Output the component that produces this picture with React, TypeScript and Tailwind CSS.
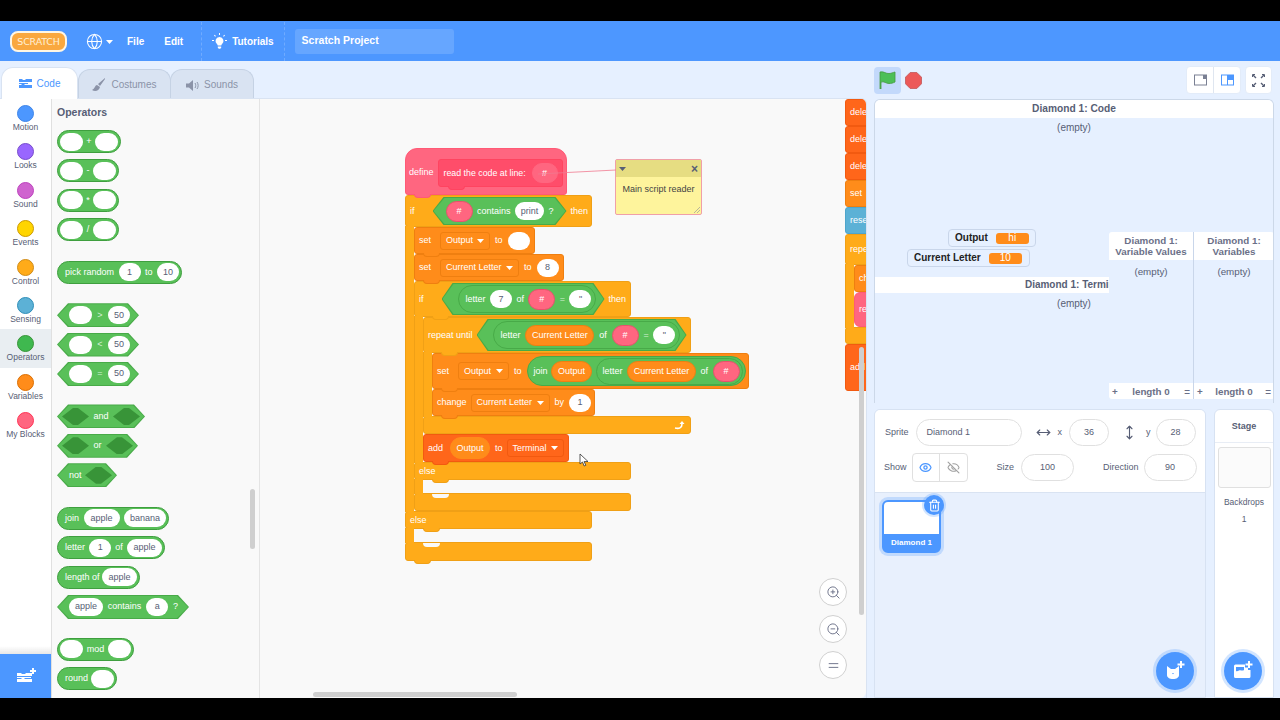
import React from "react";
import { Globe, MoveHorizontal, MoveVertical, Eye, EyeOff, Trash2, ZoomIn, ZoomOut, Equal } from "lucide-react";

const HEX = "[clip-path:polygon(0_50%,11px_0,calc(100%_-_11px)_0,100%_50%,calc(100%_-_11px)_100%,11px_100%)]";
const CTRL = "bg-[#ffab19] border-[#f0a016]";
const VAR = "bg-[#ff8c1a] border-[#ef7f10]";
const LIST = "bg-[#ff661a] border-[#f25a10]";

type P = { c?: string; children?: React.ReactNode };

function In({ c = "", children }: P) {
  return <div className={`flex items-center justify-center shrink-0 rounded-full bg-white text-[#575e75] text-[9px] leading-none ${c}`}>{children}</div>;
}
function Pal({ c = "", children }: P) {
  return <div className={`flex items-center shrink-0 h-[23px] rounded-full bg-[#59c059] border border-[#3f9f3f] text-white text-[9px] leading-none whitespace-nowrap ${c}`}>{children}</div>;
}
function Hex({ c = "", inner = "", children }: P & { inner?: string }) {
  return (
    <div className={`shrink-0 bg-[#48aa48] p-px ${HEX} ${c}`}>
      <div className={`flex items-center w-full h-full bg-[#59c059] text-white text-[9px] leading-none whitespace-nowrap ${HEX} ${inner}`}>{children}</div>
    </div>
  );
}
function Dark({ c = "" }: P) {
  return <div className={`shrink-0 h-[17px] bg-[#389438] ${HEX} ${c}`} />;
}
function Oval({ c = "", children }: P) {
  const j = c.includes("justify-between") ? "" : "justify-center";
  return <div className={`flex items-center shrink-0 rounded-full border text-white text-[9px] leading-none whitespace-nowrap ${j} ${c}`}>{children}</div>;
}
function Caret() {
  return (
    <svg width="7" height="4" viewBox="0 0 7 4" className="shrink-0">
      <path d="M0 0h7L3.5 4z" fill="#fff" />
    </svg>
  );
}
function Drop({ c = "", children }: P) {
  return (
    <div className={`flex items-center justify-between shrink-0 h-[18px] px-[5px] rounded-[3px] border text-white text-[9px] leading-none whitespace-nowrap ${c}`}>
      {children}
      <Caret />
    </div>
  );
}
function Notch({ c = "" }: P) {
  return <div className={`absolute top-full z-10 w-[17px] h-[4px] rounded-b-[5px] border-b border-x ${c}`} />;
}
function Dent({ c = "" }: P) {
  return <div className={`absolute top-0 z-10 w-[17px] h-[4px] rounded-b-[5px] bg-[#f9f9f9] ${c}`} />;
}
function Bar({ c = "", children }: P) {
  return <div className={`relative flex items-center shrink-0 rounded-[3px] border text-white text-[9px] leading-none whitespace-nowrap ${c}`}>{children}</div>;
}
function Arm({ c = "" }: P) {
  return <div className={`relative z-[1] -my-px w-[9px] shrink-0 bg-[#ffab19] border-l border-[#f0a016] ${c}`} />;
}

const categories = [
  ["Motion", "bg-[#4c97ff] border-[#3f85e8]"],
  ["Looks", "bg-[#9966ff] border-[#774dcb]"],
  ["Sound", "bg-[#cf63cf] border-[#bd42bd]"],
  ["Events", "bg-[#ffd500] border-[#cc9900]"],
  ["Control", "bg-[#ffab19] border-[#cf8b17]"],
  ["Sensing", "bg-[#5cb1d6] border-[#2e8eb8]"],
  ["Operators", "bg-[#3fb84f] border-[#389438]"],
  ["Variables", "bg-[#ff8c1a] border-[#db6e00]"],
  ["My Blocks", "bg-[#ff6680] border-[#ff3355]"],
];

function Categories() {
  return (
    <div className="flex flex-col w-[52px] shrink-0 bg-white border-r border-[#e0e0e0]">
      {categories.map(([n, col]) => (
        <div key={n} className={`flex flex-col items-center h-[38.4px] pt-[6px] shrink-0 ${n === "Operators" ? "bg-[#e9eef2]" : ""}`}>
          <div className={`w-[17px] h-[17px] rounded-full border ${col}`} />
          <span className="text-[8.5px] leading-[11px] text-[#575e75] whitespace-nowrap">{n}</span>
        </div>
      ))}
      <div className="mt-auto h-[8px] bg-gradient-to-b from-transparent to-[#00000018]" />
      <div className="flex items-center justify-center h-[44px] bg-[#4c97ff]">
        <svg width="20" height="16" viewBox="0 0 20 16" fill="#fff">
          <path d="M1 5h4l1 1h3l1-1h6v3H1zM1 9h14v1H9l-1 1H6l-1-1H1zM1 11h15v3H1z" />
          <path d="M16 0h2v2h2v2h-2v2h-2V4h-2V2h2z" />
        </svg>
      </div>
    </div>
  );
}

function Palette() {
  return (
    <div className="relative w-[208px] shrink-0 h-full overflow-hidden bg-[#f9f9f9] border-r border-[#e4e4e4] pl-[5px]">
      <div className="mt-[6px] text-[10.5px] leading-[14px] font-bold text-[#575e75]">Operators</div>
      <div className="mt-[11px] flex flex-col items-start gap-[6.4px]">
        <Pal c="w-[64px] justify-between px-[2px]"><In c="w-[23px] h-[18px]" />+<In c="w-[23px] h-[18px]" /></Pal>
        <Pal c="w-[62px] justify-between px-[2px]"><In c="w-[23px] h-[18px]" />-<In c="w-[23px] h-[18px]" /></Pal>
        <Pal c="w-[62px] justify-between px-[2px]"><In c="w-[23px] h-[18px]" />*<In c="w-[23px] h-[18px]" /></Pal>
        <Pal c="w-[62px] justify-between px-[2px]"><In c="w-[23px] h-[18px]" />/<In c="w-[23px] h-[18px]" /></Pal>
      </div>
      <div className="mt-[19.5px]">
        <Pal c="w-[125px] pl-[7px] pr-[2px] justify-between">pick random<In c="w-[22px] h-[18px]">1</In>to<In c="w-[22px] h-[18px]">10</In></Pal>
      </div>
      <div className="mt-[19.5px] flex flex-col items-start gap-[5.4px]">
        {[">", "<", "="].map((s) => (
          <Hex key={s} c="w-[82px] h-[24px]" inner="pl-[11px] pr-[8px] justify-between">
            <In c="w-[23px] h-[18px]" /><span className="text-[#d5f0d5]">{s}</span><In c="w-[22px] h-[18px]">50</In>
          </Hex>
        ))}
      </div>
      <div className="mt-[18.5px] flex flex-col items-start gap-[5.4px]">
        <Hex c="w-[88px] h-[24px]" inner="px-[4px] justify-between"><Dark c="w-[27px]" />and<Dark c="w-[27px]" /></Hex>
        <Hex c="w-[81px] h-[24px]" inner="px-[4px] justify-between"><Dark c="w-[27px]" />or<Dark c="w-[27px]" /></Hex>
        <Hex c="w-[60px] h-[24px]" inner="pl-[11px] pr-[4px] justify-between">not<Dark c="w-[27px]" /></Hex>
      </div>
      <div className="mt-[19.5px] flex flex-col items-start gap-[6.4px]">
        <Pal c="w-[112px] pl-[7px] pr-[2px] justify-between">join<In c="w-[36px] h-[18px]">apple</In><In c="w-[42px] h-[18px]">banana</In></Pal>
        <Pal c="w-[108px] pl-[7px] pr-[2px] justify-between">letter<In c="w-[22px] h-[18px]">1</In>of<In c="w-[35px] h-[18px]">apple</In></Pal>
        <Pal c="w-[83px] pl-[7px] pr-[2px] justify-between">length of<In c="w-[35px] h-[18px]">apple</In></Pal>
        <Hex c="w-[132px] h-[24px]" inner="pl-[11px] pr-[10px] justify-between"><In c="w-[34px] h-[18px]">apple</In>contains<In c="w-[22px] h-[18px]">a</In>?</Hex>
      </div>
      <div className="mt-[19px] flex flex-col items-start gap-[6.4px]">
        <Pal c="w-[77px] px-[2px] justify-between"><In c="w-[23px] h-[18px]" />mod<In c="w-[23px] h-[18px]" /></Pal>
        <Pal c="w-[60px] pl-[7px] pr-[2px] justify-between">round<In c="w-[23px] h-[18px]" /></Pal>
      </div>
      <div className="absolute left-[198px] top-[390px] w-[5px] h-[60px] rounded-full bg-[#cfcfcf]" />
    </div>
  );
}

function Script() {
  return (
    <div className="absolute left-[145px] top-[49px] flex flex-col items-start">
      <div className="relative flex items-start w-[162px] h-[47px] shrink-0 bg-[#ff6680] border border-[#ff5a76] rounded-t-[12px] rounded-b-[3px] text-white text-[9px] leading-none whitespace-nowrap">
        <span className="mt-[19px] ml-[3px]">define</span>
        <div className="relative flex items-center mt-[10px] ml-[4px] w-[125px] h-[28px] rounded-[3px] bg-[#ff4d6a] border border-[#ff4460] pl-[5px] text-[8.8px]">
          read the code at line:
          <Oval c="absolute left-[93px] top-[3px] w-[26px] h-[20px] bg-[#ff6680] border-[#ff6680]">#</Oval>
          <Notch c="left-[9px] bg-[#ff4d6a] border-[#ff4460]" />
        </div>
        <Notch c="left-[8px] bg-[#ff6680] border-[#ff5a76]" />
      </div>

      <div className="flex flex-col items-start">
        <Bar c={`w-[187px] h-[32px] pl-[4px] ${CTRL}`}>
          if
          <Hex c="ml-[18px] w-[134px] h-[28px]" inner="pl-[12px] pr-[12px] justify-between">
            <Oval c="w-[27px] h-[21px] bg-[#ff6680] border-[#e8506c]">#</Oval>
            contains
            <In c="w-[29px] h-[18px]">print</In>
            ?
          </Hex>
          <span className="ml-[4px]">then</span>
        </Bar>
        <div className="flex items-stretch">
          <Arm />
          <div className="flex flex-col items-start">
            <Bar c={`w-[121px] h-[27px] pl-[4px] ${VAR}`}>
              set
              <Drop c={`ml-[9px] w-[50px] ${VAR}`}>Output</Drop>
              <span className="ml-[5px]">to</span>
              <In c="ml-[5px] w-[22px] h-[18px]" />
              <Notch c={`left-[8px] ${VAR}`} />
            </Bar>
            <Bar c={`w-[150px] h-[27px] pl-[4px] ${VAR}`}>
              set
              <Drop c={`ml-[9px] w-[79px] ${VAR}`}>Current Letter</Drop>
              <span className="ml-[5px]">to</span>
              <In c="ml-[5px] w-[22px] h-[18px]">8</In>
              <Notch c={`left-[8px] ${VAR}`} />
            </Bar>

            <Bar c={`w-[217px] h-[36px] pl-[4px] ${CTRL}`}>
              if
              <Hex c="ml-[18px] w-[163px] h-[32px]" inner="pl-[15px]">
                <Oval c="w-[138px] h-[28px] bg-[#59c059] border-[#48aa48] pl-[7px] pr-[3px] justify-between">
                  letter
                  <In c="w-[22px] h-[18px]">7</In>
                  of
                  <Oval c="w-[27px] h-[21px] bg-[#ff6680] border-[#e8506c]">#</Oval>
                  <span className="text-[#d5f0d5]">=</span>
                  <In c="w-[22px] h-[18px]">"</In>
                </Oval>
              </Hex>
              <span className="ml-[4px]">then</span>
              <Notch c={`left-[17px] ${CTRL}`} />
            </Bar>
            <div className="flex items-stretch">
              <Arm />
              <div className="flex flex-col items-start">
                <Bar c={`w-[268px] h-[36px] pl-[4px] ${CTRL}`}>
                  repeat until
                  <Hex c="ml-[4px] w-[210px] h-[32px]" inner="pl-[15px]">
                    <Oval c="w-[187px] h-[28px] bg-[#59c059] border-[#48aa48] pl-[7px] pr-[3px] justify-between">
                      letter
                      <Oval c={`w-[69px] h-[21px] ${VAR}`}>Current Letter</Oval>
                      of
                      <Oval c="w-[27px] h-[21px] bg-[#ff6680] border-[#e8506c]">#</Oval>
                      <span className="text-[#d5f0d5]">=</span>
                      <In c="w-[22px] h-[18px]">"</In>
                    </Oval>
                  </Hex>
                  <Notch c={`left-[17px] ${CTRL}`} />
                </Bar>
                <div className="flex items-stretch">
                  <Arm />
                  <div className="flex flex-col items-start">
                    <Bar c={`w-[317px] h-[36px] pl-[4px] ${VAR}`}>
                      set
                      <Drop c={`ml-[9px] w-[51px] ${VAR}`}>Output</Drop>
                      <span className="ml-[5px]">to</span>
                      <Oval c="ml-[5px] w-[219px] h-[30px] bg-[#59c059] border-[#48aa48] pl-[6px] pr-[2px] justify-between">
                        join
                        <Oval c={`w-[41px] h-[21px] ${VAR}`}>Output</Oval>
                        <Oval c="w-[147px] h-[27px] bg-[#59c059] border-[#48aa48] pl-[6px] pr-[2px] justify-between">
                          letter
                          <Oval c={`w-[69px] h-[21px] ${VAR}`}>Current Letter</Oval>
                          of
                          <Oval c="w-[27px] h-[21px] bg-[#ff6680] border-[#e8506c]">#</Oval>
                        </Oval>
                      </Oval>
                      <Notch c={`left-[8px] ${VAR}`} />
                    </Bar>
                    <Bar c={`w-[163px] h-[27px] pl-[4px] ${VAR}`}>
                      change
                      <Drop c={`ml-[4px] w-[79px] ${VAR}`}>Current Letter</Drop>
                      <span className="ml-[5px]">by</span>
                      <In c="ml-[5px] w-[22px] h-[18px]">1</In>
                      <Notch c={`left-[8px] ${VAR}`} />
                    </Bar>
                  </div>
                </div>
                <Bar c={`w-[268px] h-[18px] justify-end pr-[5px] ${CTRL}`}>
                  <svg width="11" height="10" viewBox="0 0 11 10" fill="none" stroke="#fff" strokeWidth="1.6">
                    <path d="M1 8c4 1 7 0 7-4" />
                    <path d="M5.5 4h5L8 1z" fill="#fff" stroke="none" />
                  </svg>
                </Bar>
                <Bar c={`w-[146px] h-[28px] pl-[4px] ${LIST}`}>
                  add
                  <Oval c="ml-[7px] w-[40px] h-[22px] bg-[#ff8c1a] border-[#ff8c1a]">Output</Oval>
                  <span className="ml-[5px]">to</span>
                  <Drop c={`ml-[4px] w-[57px] ${LIST}`}>Terminal</Drop>
                  <Notch c={`left-[8px] ${LIST}`} />
                </Bar>
              </div>
            </div>
            <Bar c={`w-[217px] h-[18px] pl-[4px] ${CTRL}`}>else<Notch c={`left-[17px] ${CTRL}`} /></Bar>
            <div className="flex items-stretch h-[13px]"><Arm /></div>
            <Bar c={`w-[217px] h-[18px] ${CTRL}`}><Dent c="left-[17px]" /></Bar>
          </div>
        </div>
        <Bar c={`w-[187px] h-[18px] pl-[4px] ${CTRL}`}>else<Notch c={`left-[17px] ${CTRL}`} /></Bar>
        <div className="flex items-stretch h-[13px]"><Arm /></div>
        <Bar c={`w-[187px] h-[19px] ${CTRL}`}>
          <Dent c="left-[17px]" />
          <Notch c={`left-[8px] ${CTRL}`} />
        </Bar>
      </div>
    </div>
  );
}

function EdgeScript() {
  const S = "w-[40px] h-[27px] pl-[4px]";
  return (
    <div className="absolute left-[585px] top-0 flex flex-col items-start">
      <Bar c={`${S} ${LIST}`}>delete</Bar>
      <Bar c={`${S} ${LIST}`}>delete</Bar>
      <Bar c={`${S} ${LIST}`}>delete</Bar>
      <Bar c={`${S} ${VAR}`}>set</Bar>
      <Bar c={`${S} bg-[#5cb1d6] border-[#4ea5cb]`}>reset</Bar>
      <Bar c={`w-[40px] h-[31px] pl-[4px] ${CTRL}`}>repeat</Bar>
      <div className="flex items-stretch">
        <Arm />
        <div className="flex flex-col items-start">
          <Bar c={`w-[40px] h-[27px] pl-[4px] ${VAR}`}>change</Bar>
          <Bar c="w-[40px] h-[35px] pl-[4px] rounded-l-[6px] bg-[#ff6680] border-[#ff5a76]">read</Bar>
        </div>
      </div>
      <Bar c={`w-[40px] h-[17px] ${CTRL}`} />
      <Bar c={`w-[40px] h-[47px] pl-[4px] ${LIST}`}>add</Bar>
    </div>
  );
}

function Sticky() {
  return (
    <div className="absolute left-[355px] top-[60px] w-[87px] h-[56px] flex flex-col bg-[#fef49c] border border-[#f0a0a8] rounded-[2px] text-[#575e75]">
      <div className="flex items-center justify-between h-[17px] px-[3px] bg-[#e6dd82]">
        <svg width="7" height="4" viewBox="0 0 7 4"><path d="M0 0h7L3.5 4z" fill="#575e75" /></svg>
        <span className="text-[12px] leading-none font-bold">×</span>
      </div>
      <div className="text-[9px] leading-none text-center mt-[8px] whitespace-nowrap text-[#444]">Main script reader</div>
      <svg width="6" height="6" viewBox="0 0 6 6" className="absolute right-[1px] bottom-[1px]" stroke="#999" strokeWidth="0.7"><path d="M0 6L6 0M3 6l3-3" /></svg>
    </div>
  );
}

function Workspace() {
  return (
    <div className="relative flex-1 h-full overflow-hidden bg-[#f9f9f9] rounded-br-[6px]">
      <EdgeScript />
      <Script />
      <svg width="80" height="6" viewBox="0 0 80 6" className="absolute left-[278px] top-[70px] z-20">
        <path d="M0 5L78 1" stroke="#f07a90" strokeWidth="0.8" />
      </svg>
      <Sticky />
      {[
        { t: "top-[479px]", I: ZoomIn },
        { t: "top-[516px]", I: ZoomOut },
        { t: "top-[552px]", I: Equal },
      ].map(({ t, I }) => (
        <div key={t} className={`absolute left-[559px] ${t} w-[28px] h-[28px] rounded-full bg-white border border-[#d0d0d0] flex items-center justify-center`}>
          <I size={15} strokeWidth={1.5} color="#6b7088" />
        </div>
      ))}
      <div className="absolute left-[599px] top-[248px] w-[5px] h-[268px] rounded-full bg-[#cfcfcf]" />
      <div className="absolute left-[53px] top-[593px] w-[204px] h-[5px] rounded-full bg-[#cfcfcf]" />
      <svg width="12" height="14" viewBox="0 0 12 14" className="absolute left-[319px] top-[354px] z-20">
        <path d="M1 1v10l2.5-2 1.7 4 1.6-.7-1.7-3.8H9z" fill="#fff" stroke="#333" strokeWidth="0.8" />
      </svg>
    </div>
  );
}

function Header() {
  return (
    <div className="flex items-center h-[40px] pt-[1px] shrink-0 bg-[#4d97ff] text-white text-[10px] font-bold leading-none">
      <div className="ml-[10px] flex items-center justify-center w-[57px] h-[21px] rounded-[8px] bg-[#f9a83f] border-2 border-[#fff6e3]">
        <span className="text-[9.5px] font-normal text-[#fff0d6] tracking-[-0.2px] [font-family:'DejaVu_Sans',sans-serif]">SCRATCH</span>
      </div>
      <Globe size={17} strokeWidth={1.5} className="ml-[19px]" />
      <svg width="7" height="4" viewBox="0 0 7 4" className="ml-[3px]"><path d="M0 0h7L3.5 4z" fill="#fff" /></svg>
      <span className="ml-[14px]">File</span>
      <span className="ml-[20px]">Edit</span>
      <div className="ml-[18px] h-full border-l border-dashed border-[#ffffff33]" />
      <svg width="17" height="18" viewBox="0 0 17 18" className="ml-[9px]" fill="#fff">
        <path d="M8.5 4a4 4 0 0 0-2.4 7.2c.4.4.6.8.6 1.3h3.6c0-.5.2-.9.6-1.3A4 4 0 0 0 8.5 4zM6.8 13.5h3.4v1.2l-1 1H7.8l-1-1z" />
        <path d="M8 0h1v2H8zM1 7h2v1H1zM14 7h2v1h-2zM3 2.5l.7-.7 1.2 1.2-.7.7zM14 2.5l-.7-.7-1.2 1.2.7.7z" />
      </svg>
      <span className="ml-[4px]">Tutorials</span>
      <div className="ml-[10px] h-full border-l border-dashed border-[#ffffff33]" />
      <div className="ml-[10px] flex items-start pt-[6px] pl-[7px] w-[159px] h-[25px] rounded-[3px] bg-[#ffffff25] text-[10.5px]">Scratch Project</div>
    </div>
  );
}

function Tabs() {
  return (
    <div className="flex items-end h-[37px] shrink-0 pl-px text-[10px] leading-none">
      <div className="relative z-[1] -mb-px flex items-center justify-center gap-[4px] w-[77px] h-[32px] rounded-t-[12px] bg-white border border-b-0 border-[#d9e3f2] text-[#4c97ff]">
        <svg width="14" height="11" viewBox="0 0 14 11" fill="#4c97ff">
          <path d="M0 1h3l1 1h2l1-1h6v3H0zM0 5h9v1H6l-1 1H3L2 6H0zM0 7h13v3H0z" />
        </svg>
        Code
      </div>
      <div className="flex items-center justify-center gap-[5px] w-[93px] h-[29px] pt-[2px] rounded-t-[12px] bg-[#d9e3f2] border border-b-0 border-[#c5d2e4] text-[#8b93a8]">
        <svg width="14" height="14" viewBox="0 0 14 14" fill="#8b93a8"><path d="M13 0L6 6l2 2 5-7zM5 7C3 7 3.500 10 0 12c3 2 7 1 8-3z" /></svg>
        Costumes
      </div>
      <div className="flex items-center justify-center gap-[5px] w-[84px] h-[29px] pt-[2px] -ml-px rounded-t-[12px] bg-[#d9e3f2] border border-b-0 border-[#c5d2e4] text-[#8b93a8]">
        <svg width="13" height="11" viewBox="0 0 13 11" fill="#8b93a8"><path d="M0 3.500h3L7 0v11L3 7.500H0z" /><path d="M9 3c1 1.500 1 3.500 0 5M11 2c1.500 2 1.500 5 0 7" stroke="#8b93a8" fill="none" /></svg>
        Sounds
      </div>
    </div>
  );
}

function StageHead() {
  return (
    <div className="flex items-center h-[38px] shrink-0">
      <div className="flex items-center justify-center w-[27px] h-[27px] rounded-[4px] bg-[#c3d9fb]">
        <svg width="17" height="18" viewBox="0 0 17 18">
          <path d="M1 1c4-1 6 2 9 1.500 2 0 4-1 6-1.500v10c-2 1-4 1.500-6 1.500-3 0-5-2.500-8-1.500V18H1z" fill="#4cbf56" stroke="#45993d" strokeWidth="0.8" />
        </svg>
      </div>
      <svg width="17" height="17" viewBox="0 0 18 18" className="ml-[4px]">
        <polygon points="5.500,0.500 12.500,0.500 17.500,5.500 17.500,12.500 12.500,17.500 5.500,17.500 0.500,12.500 0.500,5.500" fill="#ec5959" stroke="#b84848" strokeWidth="0.7" />
      </svg>
      <div className="ml-auto flex h-[28px] w-[55px] rounded-[4px] bg-white border border-[#e3ecf9]">
        <div className="flex flex-1 items-center justify-center border-r border-[#dfe6f0]">
          <svg width="13" height="12" viewBox="0 0 13 12"><rect x=".5" y="1" width="12" height="10" fill="none" stroke="#7a8093" /><rect x="9" y="1" width="3.500" height="4" fill="#7a8093" /></svg>
        </div>
        <div className="flex flex-1 items-center justify-center">
          <svg width="13" height="12" viewBox="0 0 13 12"><rect x=".5" y="1" width="12" height="10" fill="none" stroke="#4c97ff" /><rect x="6" y="1" width="6.500" height="5" fill="#4c97ff" /><rect x="6" y="1" width="1" height="10" fill="#4c97ff" /></svg>
        </div>
      </div>
      <div className="ml-[4px] mr-[2px] flex items-center justify-center w-[27px] h-[28px] rounded-[4px] bg-white border border-[#e3ecf9]">
        <svg width="13" height="13" viewBox="0 0 13 13" fill="none" stroke="#575e75" strokeWidth="1.400">
          <path d="M1 1l3 3M12 1L9 4M1 12l3-3M12 12L9 9" />
          <path d="M0.500 3V.500H3M12.500 3V.500H10M.500 10v2.500H3M12.500 10v2.500H10" strokeWidth="1" />
        </svg>
      </div>
    </div>
  );
}

function ListMon({ title2, c = "" }: { title2: string; c?: string }) {
  return (
    <div className={`flex flex-col h-full bg-[#e6f0ff] text-[9.8px] leading-[11px] text-[#6b7088] ${c}`}>
      <div className="flex flex-col items-center justify-center h-[28px] bg-white font-bold shrink-0">
        <span>Diamond 1:</span>
        <span>{title2}</span>
      </div>
      <div className="text-center mt-[6px] flex-1 font-normal text-[#575e75]">(empty)</div>
      <div className="flex items-center justify-between h-[16px] bg-white px-[3px] font-bold shrink-0">
        <span>+</span>
        <span>length 0</span>
        <span>=</span>
      </div>
    </div>
  );
}

function Stage() {
  return (
    <div className="relative h-[304px] shrink-0 rounded-t-[6px] border border-[#ccd8e8] border-b-0 bg-[#e6f0ff] overflow-hidden text-[10px] leading-none text-[#575e75]">
      <div className="flex items-center justify-center h-[18px] bg-white font-bold text-[10.2px]">Diamond 1: Code</div>
      <div className="text-center mt-[5px]">(empty)</div>
      <div className="absolute left-[73px] top-[129px] flex items-center gap-[8px] w-[88px] h-[18px] pl-[6px] rounded-[4px] border border-[#c9d6ea] font-bold text-[#222]">
        Output
        <span className="flex items-center justify-center w-[33px] h-[11px] rounded-[3px] bg-[#ff8c1a] text-white font-normal">hi</span>
      </div>
      <div className="absolute left-[32px] top-[149px] flex items-center gap-[8px] w-[123px] h-[18px] pl-[6px] rounded-[4px] border border-[#c9d6ea] font-bold text-[#222]">
        Current Letter
        <span className="flex items-center justify-center w-[33px] h-[11px] rounded-[3px] bg-[#ff8c1a] text-white font-normal">10</span>
      </div>
      <div className="absolute left-0 right-0 top-[177px]">
        <div className="flex items-center justify-center h-[16px] bg-white font-bold">Diamond 1: Terminal</div>
        <div className="text-center mt-[6px]">(empty)</div>
      </div>
      <div className="absolute left-[234px] top-[132px] h-[167px] flex rounded-[3px] overflow-hidden">
        <ListMon title2="Variable Values" c="w-[85px] border-r border-[#c9d6ea]" />
        <ListMon title2="Variables" c="w-[80px]" />
      </div>
    </div>
  );
}

function Field({ c = "", children }: P) {
  return <div className={`flex items-center h-[27px] rounded-full border border-[#e0e0e0] text-[9px] text-[#575e75] shrink-0 ${c}`}>{children}</div>;
}

function SpritePane() {
  return (
    <div className="relative flex flex-col w-[332px] h-full rounded-t-[6px] border border-[#d7e2f2] bg-[#e8f0fd] overflow-hidden text-[9px] leading-none text-[#575e75]">
      <div className="h-[83px] shrink-0 bg-white border-b border-[#d9e3f2] flex flex-col">
        <div className="flex items-center h-[27px] mt-[9px] pl-[10px]">
          <span>Sprite</span>
          <Field c="ml-[7px] w-[106px] pl-[10px]">Diamond 1</Field>
          <MoveHorizontal size={15} strokeWidth={1.8} className="ml-[14px]" />
          <span className="ml-[7px]">x</span>
          <Field c="ml-[7px] w-[40px] justify-center">36</Field>
          <MoveVertical size={15} strokeWidth={1.8} className="ml-[13px]" />
          <span className="ml-[9px]">y</span>
          <Field c="ml-[5px] w-[40px] justify-center">28</Field>
        </div>
        <div className="flex items-center h-[29px] mt-[7px] pl-[9px]">
          <span>Show</span>
          <div className="ml-[5px] flex w-[56px] h-[29px] rounded-[4px] border border-[#e0e0e0]">
            <div className="flex flex-1 items-center justify-center border-r border-[#e0e0e0]"><Eye size={13} color="#4c97ff" strokeWidth={2.4} /></div>
            <div className="flex flex-1 items-center justify-center"><EyeOff size={13} color="#a0a0a0" strokeWidth={2} /></div>
          </div>
          <span className="ml-[29px]">Size</span>
          <Field c="ml-[7px] w-[53px] justify-center h-[27px]">100</Field>
          <span className="ml-[29px]">Direction</span>
          <Field c="ml-[5px] w-[53px] justify-center h-[27px]">90</Field>
        </div>
      </div>
      <div className="relative ml-[7px] mt-[7px] w-[59px] h-[53px] rounded-[6px] border-2 border-[#4c97ff] bg-white flex flex-col justify-end shadow-[0_0_0_3px_#4c97ff40]">
        <div className="flex items-center justify-center h-[17px] bg-[#4c97ff] text-white font-bold text-[8px]">Diamond 1</div>
      </div>
      <div className="absolute left-[49px] top-[85px] w-[20px] h-[20px] rounded-full bg-[#4c97ff] shadow-[0_0_0_2px_#4c97ff40] flex items-center justify-center">
        <Trash2 size={13} color="#fff" strokeWidth={2} />
      </div>
      <div className="absolute right-[11px] bottom-[7px] w-[38px] h-[38px] rounded-full bg-[#4c97ff] shadow-[0_0_0_3px_#4c97ff40] flex items-center justify-center">
        <svg width="20" height="20" viewBox="0 0 20 20" fill="#fff">
          <path d="M2 5l4 3h4l4-3v9c0 2.500-2.500 4-6 4s-6-1.500-6-4z" />
          <path d="M7 12h2l-1 1.200z" fill="#4c97ff" />
          <path d="M15 0h2v2.500h2.500v2H17V7h-2V4.500h-2.500v-2H15z" />
        </svg>
      </div>
    </div>
  );
}

function StageSelect() {
  return (
    <div className="relative flex flex-col items-center w-[60px] h-full rounded-t-[6px] border border-[#d7e2f2] bg-white text-[#575e75] leading-none">
      <div className="flex items-center justify-center w-full h-[33px] border-b border-[#e8edf5] text-[9px] font-bold">Stage</div>
      <div className="mt-[4px] w-[53px] h-[41px] rounded-[3px] border border-[#e0e0e0] bg-[#fbfbfb]" />
      <div className="mt-[10px] text-[8.5px]">Backdrops</div>
      <div className="mt-[8px] text-[8.5px]">1</div>
      <div className="absolute left-[9px] bottom-[7px] w-[38px] h-[38px] rounded-full bg-[#4c97ff] shadow-[0_0_0_3px_#4c97ff40] flex items-center justify-center">
        <svg width="20" height="20" viewBox="0 0 20 20" fill="#fff">
          <path d="M1 5a1.500 1.500 0 0 1 1.500-1.500H12v3h3V9h2.500v6.500A1.500 1.500 0 0 1 16 17H2.500A1.500 1.500 0 0 1 1 15.500z" />
          <path d="M3 6h8v3c-2 1.500-3-.5-5 .5-1 .5-2 1-3 .5z" fill="#4c97ff" />
          <path d="M15 0h2v2.500h2.500v2H17V7h-2V4.500h-2.500v-2H15z" />
        </svg>
      </div>
    </div>
  );
}

export default function App() {
  return (
    <div className="w-[1280px] h-[720px] flex flex-col bg-black overflow-hidden [font-family:'Liberation_Sans',Arial,sans-serif]">
      <div className="h-[21px] shrink-0" />
      <Header />
      <div className="flex h-[637px] shrink-0 bg-[#e6f0ff]">
        <div className="flex flex-col w-[867px] shrink-0">
          <Tabs />
          <div className="flex flex-1 min-h-0 border-t border-r border-[#d9e3f2] rounded-tr-[6px] overflow-hidden">
            <Categories />
            <Palette />
            <Workspace />
          </div>
        </div>
        <div className="flex flex-col w-[400px] ml-[7px]">
          <StageHead />
          <Stage />
          <div className="flex flex-1 min-h-0 gap-[8px] mt-[6px]">
            <SpritePane />
            <StageSelect />
          </div>
        </div>
      </div>
    </div>
  );
}
